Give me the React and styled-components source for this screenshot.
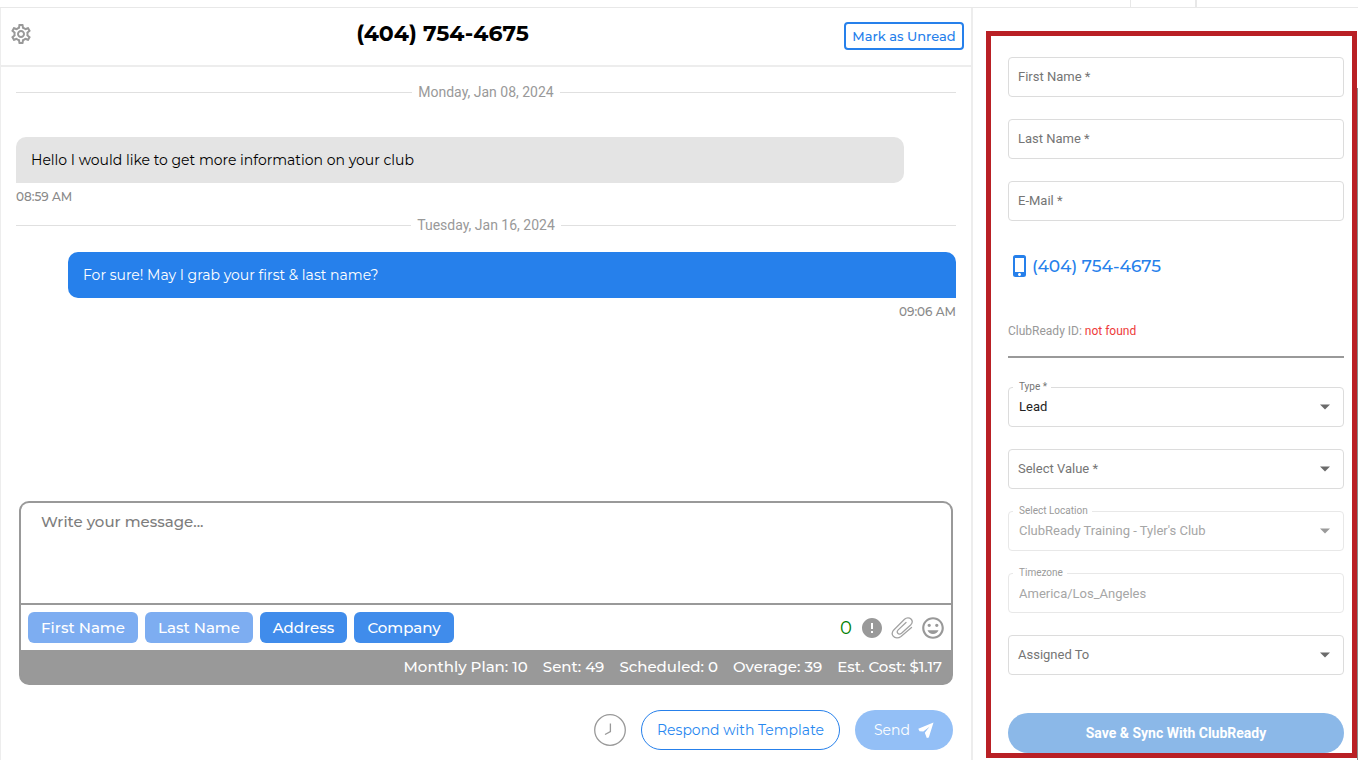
import React from "react";
import styled, { createGlobalStyle, css } from "styled-components";
import { MdOutlineSettings, MdError, MdInsertEmoticon, MdPhoneIphone } from "react-icons/md";

const brand = '"Montserrat", "Inter", "Liberation Sans", sans-serif';
const body = '"Roboto", "Liberation Sans", sans-serif';
const blue = "#2680eb";
const grey = "#999";
const line = "#ededed";

const GlobalStyle = createGlobalStyle`
  *, *::before, *::after { box-sizing: border-box; }
  body { margin: 0; background: #fff; font-family: ${body}; }
  button, input, select, textarea { font: inherit; margin: 0; }
`;

const Page = styled.div`
  display: flex;
  flex-direction: column;
  min-height: 100vh;
`;

const TopStrip = styled.div`
  display: flex;
  justify-content: flex-end;
  height: 8px;
  border-bottom: 1px solid #e8e8e8;
`;

const TopCell = styled.div`
  width: ${(p) => p.$width}px;
  border-left: ${(p) => p.$line}px solid #e8e8e8;
`;

const Columns = styled.div`
  display: grid;
  grid-template-columns: minmax(0, 1fr) 387px;
  flex: 1;
`;

const Chat = styled.main`
  display: flex;
  flex-direction: column;
  border-left: 1px solid ${line};
`;

const ChatHeader = styled.header`
  display: flex;
  justify-content: space-between;
  align-items: center;
  height: 59px;
  padding: 0 7px 5px 8px;
  border-bottom: 2px solid ${line};
`;

const IconButton = styled.button`
  display: flex;
  width: ${(p) => (p.$wide ? "32px" : "auto")};
  padding: 0;
  border: 0;
  background: none;
  color: ${grey};
  cursor: pointer;
`;

const Title = styled.h1`
  margin: 0;
  font: 700 22px/24px ${brand};
  color: #000;
`;

const UnreadButton = styled.button`
  width: 120px;
  height: 28px;
  margin-top: 4px;
  padding: 0;
  border: 2px solid ${blue};
  border-radius: 4px;
  background: #fff;
  color: ${blue};
  font: 500 13px/20px ${brand};
`;

const Messages = styled.section`
  flex: 1;
  padding: 15px 15px 0;
`;

const DateLine = styled.div`
  display: flex;
  align-items: center;
  gap: 6px;
  height: 20px;
  font-size: 14px;
  line-height: 20px;
  color: ${grey};
  &::before, &::after { content: ""; flex: 1; height: 1px; background: #e0e0e0; }
`;

const Message = styled.article`
  display: flex;
  flex-direction: column;
  align-items: ${(p) => (p.$own ? "flex-end" : "flex-start")};
  padding: ${(p) => (p.$own ? "17px 0 0" : "35px 0 8px")};
`;

const Bubble = styled.p`
  width: calc(100% - 52px);
  margin: 0;
  padding: 12px 15px;
  border-radius: ${(p) => (p.$own ? "10px 10px 0 10px" : "10px 10px 10px 0")};
  background: ${(p) => (p.$own ? blue : "#e4e4e4")};
  color: ${(p) => (p.$own ? "#fff" : "#000")};
  font: 400 14px/22px ${brand};
`;

const Time = styled.time`
  margin-top: 4px;
  font: 500 12px/20px ${brand};
  color: #8a8a8a;
`;

const Composer = styled.form`
  padding: 0 18px 10px;
`;

const Editor = styled.div`
  overflow: hidden;
  border: 2px solid ${grey};
  border-radius: 10px;
  background: ${grey};
`;

const MessageBox = styled.textarea`
  display: block;
  width: 100%;
  height: 102px;
  padding: 8px 20px;
  border: 0;
  border-bottom: 2px solid ${grey};
  outline: 0;
  resize: none;
  background: #fff;
  font: 500 15px/22px ${brand};
  &::placeholder { color: #7d7d7d; opacity: 1; }
`;

const Toolbar = styled.div`
  display: flex;
  align-items: center;
  gap: 7px;
  height: 45px;
  padding: 0 5px 0 7px;
  background: #fff;
`;

const Chip = styled.button`
  width: ${(p) => p.$width}px;
  height: 31px;
  padding: 0;
  border: 0;
  border-radius: 6px;
  background: ${(p) => (p.disabled ? "#7dadf1" : "#408ceb")};
  color: #fff;
  font: 500 15px/20px ${brand};
`;

const Tools = styled.div`
  display: flex;
  align-items: center;
  gap: 6px;
  margin-left: auto;
`;

const Count = styled.output`
  padding-right: 2px;
  font: 400 18px/24px ${brand};
  color: #008000;
`;

const Stats = styled.ul`
  display: flex;
  justify-content: flex-end;
  gap: 15px;
  margin: 0;
  padding: 7px 9px 6px;
  list-style: none;
  color: #fff;
  font: 500 15px/20px ${brand};
`;

const Actions = styled.div`
  display: flex;
  justify-content: flex-end;
  align-items: center;
  gap: 15px;
  padding-top: 25px;
`;

const Pill = styled.button`
  display: flex;
  align-items: center;
  justify-content: center;
  gap: 8px;
  width: ${(p) => p.$width}px;
  height: 40px;
  padding: 0;
  border: ${(p) => (p.$solid ? "0" : `1px solid ${blue}`)};
  border-radius: 20px;
  background: ${(p) => (p.$solid ? "#93bff6" : "#fff")};
  color: ${(p) => (p.$solid ? "#fff" : "#2787f0")};
  font: 400 14px/20px ${brand};
`;

const Side = styled.aside`
  position: relative;
  padding: 23px 1px 2px 13px;
  border-left: 2px solid ${line};
  &::after {
    content: "";
    position: absolute;
    top: 80px;
    right: 0;
    bottom: 0;
    width: 1px;
    background: #8c8c8c;
  }
`;

const Panel = styled.form`
  display: flex;
  flex-direction: column;
  border: 5px solid #b92025;
  padding: 21px 8px 0 17px;
`;

const FieldGroup = styled.div`
  display: flex;
  flex-direction: column;
  gap: 22px;
`;

const FieldBox = styled.div`
  position: relative;
  display: flex;
  height: 40px;
`;

const control = css`
  width: 100%;
  height: 40px;
  padding: 0 10px;
  border: 1px solid #dcdcdc;
  border-radius: 4px;
  outline: 0;
  background: transparent;
  appearance: none;
  color: #222;
  font: 400 13px/20px ${body};
  &:disabled { color: #a6a6a6; border-color: #e8e8e8; opacity: 1; }
`;

const TextInput = styled.input`${control}`;
const Select = styled.select`${control}`;

const Label = styled.label`
  position: absolute;
  left: ${(p) => (p.$floating ? 5 : 10)}px;
  top: ${(p) => (p.$floating ? -6 : 10)}px;
  padding: ${(p) => (p.$floating ? "0 4px 0 6px" : "0")};
  background: ${(p) => (p.$floating ? "#fff" : "none")};
  color: ${(p) => (p.$dim ? "#9a9a9a" : "#757575")};
  font: 400 ${(p) => (p.$floating ? "10px/12px" : "13px/20px")} ${body};
  pointer-events: none;
`;

const Caret = styled.svg`
  position: absolute;
  right: 14px;
  top: 17px;
  width: 10px;
  height: 6px;
  fill: ${(p) => (p.$dim ? "#9a9a9a" : "#6b6b6b")};
  pointer-events: none;
`;

const PhoneLink = styled.a`
  display: flex;
  align-items: center;
  margin-top: 33px;
  color: ${blue};
  font: 500 17px/24px ${brand};
  text-decoration: none;
`;

const ClubId = styled.p`
  margin: 43px 0 29px;
  padding-bottom: 15px;
  border-bottom: 2px solid ${grey};
  font-size: 12px;
  line-height: 20px;
  color: ${grey};
`;

const Missing = styled.span`
  color: #ee3a3a;
`;

const SaveButton = styled.button`
  height: 40px;
  margin-top: 38px;
  border: 0;
  border-radius: 20px;
  background: #8bb8e8;
  color: #fff;
  font: 700 14px/20px ${body};
`;

const Paperclip = () => (
  <svg width="24" height="24" viewBox="0 0 24 24" fill="none" stroke="#a3a3a3" strokeWidth="1.3" strokeLinecap="round" aria-hidden="true">
    <path d="M21.500 11.500 11 20.500C8.500 22.500 5 22.500 3.200 20.200 1.500 18 2.300 15.500 4 13.800L14.500 3.300C16.500 1.300 19.500 1.500 21 3c1.700 1.800 1.300 4.300-.4 6l-9.100 8.200c-1.300 1.100-2.800 1.100-3.700.1-.9-1.100-.6-2.400.4-3.400L16 6.500" />
  </svg>
);

const Clock = () => (
  <svg width="32" height="32" viewBox="0 0 32 32" fill="none" stroke="#999" aria-hidden="true">
    <circle cx="16" cy="16" r="15.3" strokeWidth="1.3" />
    <path d="M16.400 9.500v8l-5.400 3" strokeWidth="1.300" />
  </svg>
);

const Plane = () => (
  <svg width="16" height="16" viewBox="0 0 16 16" fill="#fff" aria-hidden="true">
    <path d="M15.500 0.500 0.300 6.800 1.500 9.200 5.300 9.600 11.500 4.800 6.800 10.700 8.800 16 10.800 15.500z" />
  </svg>
);

function Field({ id, label, value, options, floating, disabled }) {
  return (
    <FieldBox>
      {options ? (
        <Select id={id} defaultValue={value || ""} disabled={disabled}>
          {options.map((o) => <option key={o} value={o}>{o}</option>)}
        </Select>
      ) : (
        <TextInput id={id} defaultValue={value} disabled={disabled} />
      )}
      <Label htmlFor={id} $floating={floating} $dim={disabled}>{label}</Label>
      {options && <Caret viewBox="0 0 10 6" $dim={disabled} aria-hidden="true"><path d="M0 0.500h10L5 5.500z" /></Caret>}
    </FieldBox>
  );
}

const chips = [
  { text: "First Name", width: 110, disabled: true },
  { text: "Last Name", width: 108, disabled: true },
  { text: "Address", width: 87 },
  { text: "Company", width: 100 },
];

const stats = ["Monthly Plan: 10", "Sent: 49", "Scheduled: 0", "Overage: 39", "Est. Cost: $1.17"];

export default function App() {
  return (
    <Page>
      <GlobalStyle />
      <TopStrip>
        <TopCell $width={65} $line={1} />
        <TopCell $width={163} $line={2} />
      </TopStrip>
      <Columns>
        <Chat>
          <ChatHeader>
            <IconButton type="button" $wide aria-label="Settings"><MdOutlineSettings size={24} /></IconButton>
            <Title>(404) 754-4675</Title>
            <UnreadButton type="button">Mark as Unread</UnreadButton>
          </ChatHeader>
          <Messages>
            <DateLine>Monday, Jan 08, 2024</DateLine>
            <Message>
              <Bubble>Hello I would like to get more information on your club</Bubble>
              <Time>08:59 AM</Time>
            </Message>
            <DateLine>Tuesday, Jan 16, 2024</DateLine>
            <Message $own>
              <Bubble $own>For sure! May I grab your first &amp; last name?</Bubble>
              <Time>09:06 AM</Time>
            </Message>
          </Messages>
          <Composer>
            <Editor>
              <MessageBox aria-label="Message" placeholder="Write your message..." />
              <Toolbar>
                {chips.map((c) => (
                  <Chip key={c.text} type="button" $width={c.width} disabled={c.disabled}>{c.text}</Chip>
                ))}
                <Tools>
                  <Count>0</Count>
                  <IconButton type="button" aria-label="Message length"><MdError size={24} /></IconButton>
                  <IconButton type="button" aria-label="Attach a file"><Paperclip /></IconButton>
                  <IconButton type="button" aria-label="Insert emoji"><MdInsertEmoticon size={26} /></IconButton>
                </Tools>
              </Toolbar>
              <Stats>{stats.map((s) => <li key={s}>{s}</li>)}</Stats>
            </Editor>
            <Actions>
              <IconButton type="button" aria-label="Schedule"><Clock /></IconButton>
              <Pill type="button" $width={199}>Respond with Template</Pill>
              <Pill type="submit" $solid $width={98} disabled>Send <Plane /></Pill>
            </Actions>
          </Composer>
        </Chat>
        <Side>
          <Panel>
            <FieldGroup>
              <Field id="first" label="First Name *" />
              <Field id="last" label="Last Name *" />
              <Field id="email" label="E-Mail *" />
            </FieldGroup>
            <PhoneLink href="tel:4047544675"><MdPhoneIphone size={24} aria-hidden="true" />(404) 754-4675</PhoneLink>
            <ClubId>ClubReady ID: <Missing>not found</Missing></ClubId>
            <FieldGroup>
              <Field id="type" label="Type *" value="Lead" options={["Lead"]} floating />
              <Field id="value" label="Select Value *" options={[""]} />
              <Field id="location" label="Select Location" value="ClubReady Training - Tyler's Club" options={["ClubReady Training - Tyler's Club"]} floating disabled />
              <Field id="timezone" label="Timezone" value="America/Los_Angeles" floating disabled />
              <Field id="assigned" label="Assigned To" options={[""]} />
            </FieldGroup>
            <SaveButton type="submit">Save &amp; Sync With ClubReady</SaveButton>
          </Panel>
        </Side>
      </Columns>
    </Page>
  );
}
